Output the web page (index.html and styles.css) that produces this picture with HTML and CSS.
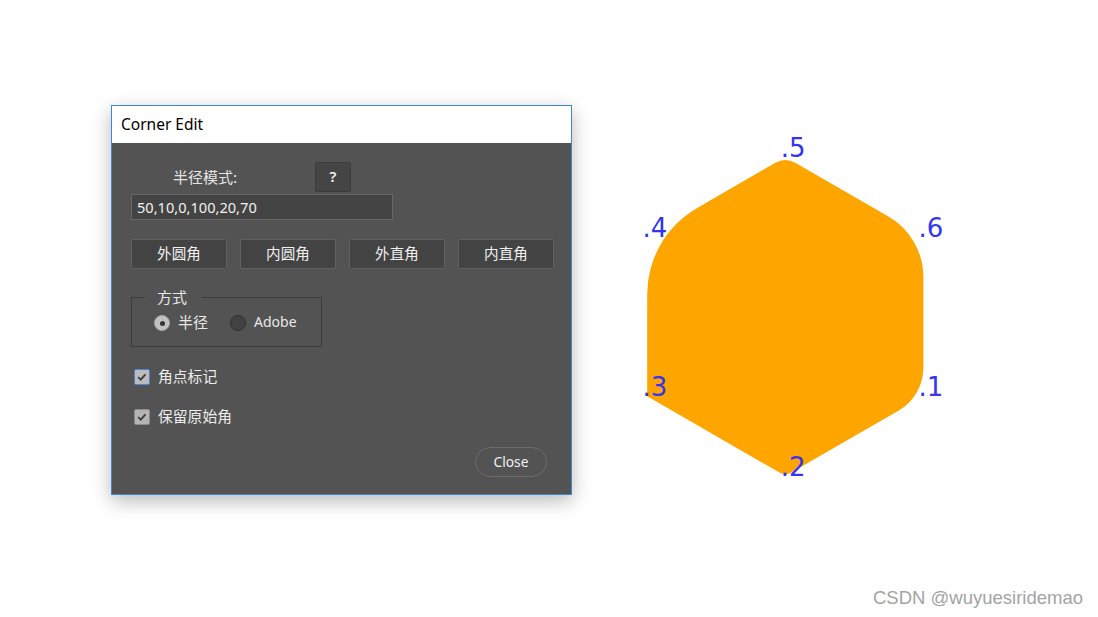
FILE: index.html
```html
<!DOCTYPE html>
<html lang="zh-CN">
<head>
<meta charset="utf-8">
<title>Corner Edit</title>
<link rel="stylesheet" href="styles.css">
</head>
<body>
<div class="page">
  <div class="stage">
    <div class="dialog">
      <div class="titlebar">Corner Edit</div>
      <div class="dlg-body">
        <div class="row-mode">
          <span class="mode-label">半径模式:</span>
          <button class="help-btn">?</button>
        </div>
        <div class="input">50,10,0,100,20,70</div>
        <div class="btn-row">
          <button class="btn">外圆角</button>
          <button class="btn">内圆角</button>
          <button class="btn">外直角</button>
          <button class="btn">内直角</button>
        </div>
        <div class="group">
          <div class="group-title">方式</div>
          <div class="radio-row">
            <span class="radio checked"></span><span class="radio-text">半径</span>
            <span class="radio"></span><span class="radio-text latin">Adobe</span>
          </div>
        </div>
        <div class="check-row first">
          <span class="check focus"><svg viewBox="0 0 16 16" width="14" height="14"><polyline points="3.5,8 6.5,11 12,5" fill="none" stroke="#3a3a3a" stroke-width="2"/></svg></span>
          <span class="check-text">角点标记</span>
        </div>
        <div class="check-row second">
          <span class="check"><svg viewBox="0 0 16 16" width="14" height="14"><polyline points="3.5,8 6.5,11 12,5" fill="none" stroke="#3a3a3a" stroke-width="2"/></svg></span>
          <span class="check-text">保留原始角</span>
        </div>
        <div class="footer">
          <button class="close-btn">Close</button>
        </div>
      </div>
    </div>
    <svg class="shape" width="340" height="360" viewBox="0 0 340 360">
      <path d="M 155.3 32.77 A 20 20 0 0 1 175.3 32.77 L 268.4 86.55 A 70 70 0 0 1 303.4 147.16 L 303.4 237.38 A 50 50 0 0 1 278.4 280.68 L 170.3 343.11 A 10 10 0 0 1 160.3 343.11 L 27.2 266.25 L 27.2 164.49 A 100 100 0 0 1 77.2 77.88 Z" fill="#ffa500"/>
      <g class="labels">
        <text x="298.6" y="266.25">.1</text>
        <text x="160.8" y="346">.2</text>
        <text x="22.4" y="266.25">.3</text>
        <text x="22.4" y="106.75">.4</text>
        <text x="160.8" y="27">.5</text>
        <text x="298.6" y="106.75">.6</text>
      </g>
    </svg>
  </div>
  <div class="watermark">CSDN @wuyuesiridemao</div>
</div>
</body>
</html>
```

FILE: styles.css
```css
html, body {
  margin: 0;
  padding: 0;
  background: #ffffff;
}

.page {
  width: 1098px;
  height: 617px;
  display: flex;
  flex-direction: column;
  overflow: hidden;
  font-family: "Noto Sans", "Noto Sans CJK SC", sans-serif;
}

.stage {
  flex: 1;
  display: flex;
  align-items: flex-start;
  padding: 105px 0 0 111px;
}

.dialog {
  width: 461px;
  box-sizing: border-box;
  border: 1px solid #3f86d4;
  box-shadow: 0 6px 18px rgba(0, 0, 0, 0.28);
  display: flex;
  flex-direction: column;
}

.titlebar {
  height: 37px;
  box-sizing: border-box;
  padding: 0 0 2px 9px;
  background: #ffffff;
  color: #000000;
  font-size: 15.5px;
  display: flex;
  align-items: center;
}

.dlg-body {
  background: #535353;
  height: 351px;
  box-sizing: border-box;
  padding: 19px 18px 17px 19px;
  display: flex;
  flex-direction: column;
  color: #ebebeb;
  font-size: 15px;
}

.row-mode {
  display: flex;
  align-items: center;
  height: 30px;
}

.mode-label {
  width: 142px;
  margin-left: 42px;
  padding-bottom: 2px;
  font-family: "Noto Sans CJK SC", sans-serif;
  font-size: 15px;
  color: #e4e4e4;
}

.help-btn {
  width: 36px;
  height: 30px;
  box-sizing: border-box;
  background: #454545;
  border: 1px solid #3a3a3a;
  border-radius: 2px;
  color: #f2f2f2;
  font-family: "Noto Sans", sans-serif;
  font-size: 15px;
  font-weight: 600;
  padding: 0 0 2px 0;
  margin: 0;
}

.input {
  margin-top: 2px;
  width: 262px;
  height: 26px;
  box-sizing: border-box;
  background: #434343;
  border: 1px solid #676767;
  display: flex;
  align-items: center;
  padding: 0 0 1px 5px;
  font-family: "Noto Sans", sans-serif;
  font-size: 14.6px;
  color: #f0f0f0;
}

.btn-row {
  margin-top: 19px;
  display: grid;
  grid-template-columns: repeat(4, 96px);
  column-gap: 13px;
}

.btn {
  height: 30px;
  box-sizing: border-box;
  background: #434343;
  border: 1px solid #606060;
  border-radius: 2px;
  color: #f0f0f0;
  font-family: "Noto Sans CJK SC", sans-serif;
  font-size: 14.6px;
  padding: 0 0 3px 0;
  margin: 0;
}

.group {
  margin-top: 28px;
  width: 191px;
  height: 50px;
  box-sizing: border-box;
  border: 1px solid #3c3c3c;
  display: flex;
  flex-direction: column;
  align-items: flex-start;
}

.group-title {
  margin-top: -11px;
  margin-left: 13px;
  padding: 0 15px 0 12px;
  height: 20px;
  line-height: 20px;
  background: #535353;
  font-family: "Noto Sans CJK SC", sans-serif;
  font-size: 15px;
  color: #e6e6e6;
}

.radio-row {
  margin-top: 8px;
  margin-left: 22px;
  display: flex;
  align-items: center;
  height: 16px;
}

.radio {
  width: 16px;
  height: 16px;
  box-sizing: border-box;
  border-radius: 50%;
  background: #424242;
  border: 1px solid #2f2f2f;
  display: flex;
  align-items: center;
  justify-content: center;
}

.radio.checked {
  background: #c2c2c2;
  border-color: #a8a8a8;
  margin-right: 8px;
}

.radio.checked::after {
  content: "";
  width: 5px;
  height: 5px;
  border-radius: 50%;
  background: #333333;
}

.radio-text {
  font-family: "Noto Sans CJK SC", sans-serif;
  font-size: 15px;
  color: #e8e8e8;
  margin-right: 22px;
  padding-bottom: 3px;
}

.radio-text.latin {
  font-family: "Noto Sans", sans-serif;
  font-size: 14px;
  margin-left: 8px;
  margin-right: 0;
}

.check-row {
  display: flex;
  align-items: center;
  height: 16px;
  margin-left: 3px;
}

.check-row.first {
  margin-top: 22px;
}

.check-row.second {
  margin-top: 23px;
  height: 17px;
}

.check {
  width: 16px;
  height: 16px;
  box-sizing: border-box;
  border-radius: 2px;
  background: #b4b4b4;
  border: 1px solid #8c8c8c;
  display: flex;
  align-items: center;
  justify-content: center;
  margin-right: 8px;
}

.check.focus {
  border: 1px solid #4f82d8;
  background: #bcbcbc;
}

.check-text {
  font-family: "Noto Sans CJK SC", sans-serif;
  font-size: 14.8px;
  color: #ececec;
  padding-bottom: 3px;
}

.footer {
  margin-top: 22px;
  display: flex;
  justify-content: flex-end;
  padding-right: 6px;
}

.close-btn {
  width: 72px;
  height: 30px;
  box-sizing: border-box;
  border-radius: 15px;
  border: 1px solid #6c6c6c;
  background: transparent;
  color: #f0f0f0;
  font-family: "Noto Sans", sans-serif;
  font-size: 13.8px;
  padding: 0 0 2px 0;
  margin: 0;
}

.shape {
  display: block;
  margin-top: 25px;
  margin-left: 48px;
  overflow: visible;
}

.labels text {
  font-family: "DejaVu Sans", sans-serif;
  font-size: 26px;
  fill: #3434f2;
}

.watermark {
  text-align: right;
  padding: 0 15px 8px 0;
  font-family: "Liberation Sans", Arial, sans-serif;
  font-size: 18.5px;
  line-height: 22px;
  color: #a3a3a3;
}
```
